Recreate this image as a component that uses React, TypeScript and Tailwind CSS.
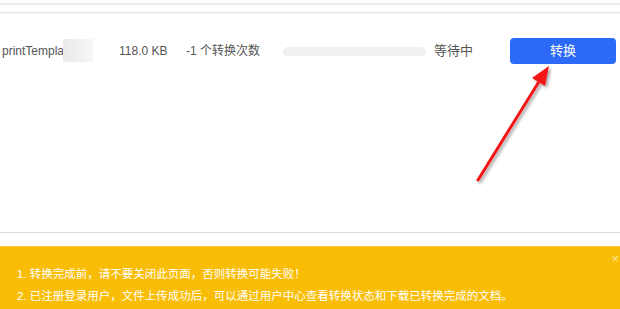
import React from "react";

export default function App() {
  const font = { fontFamily: '"Liberation Sans", Arial, "Noto Sans CJK SC", sans-serif' };
  return (
    <div className="relative w-[620px] h-[309px] bg-white overflow-hidden" style={font}>
      <div className="h-[3px]" />
      <div className="h-[2px] bg-[#ebebeb]" />
      <div className="h-[7px]" />
      <div className="h-[1px] bg-[#e2e2e2] shadow-[0_1px_1px_rgba(0,0,0,0.04)]" />
      <div className="h-[219px] flex items-start pt-[25px]">
        <div className="flex items-center h-[26px] w-full text-[12px] text-[#555]">
          <div className="relative w-[117px] flex items-center h-[26px]">
            <span className="pl-[2px] whitespace-nowrap">printTemplat</span>
            <div className="absolute left-[63px] top-[1px] w-[30px] h-[23px] bg-gradient-to-r from-[#ebe9eb] to-[#f7f7f7]" />
          </div>
          <div className="w-[69px] pl-[2px]">118.0 KB</div>
          <div className="w-[96px]">-1 个转换次数</div>
          <div className="w-[143px] h-[9px] rounded-full bg-[#f0f0f0] ml-[1px]" />
          <div className="w-[84px] pl-[8px] text-[13px]">等待中</div>
          <button className="w-[106px] h-[26px] rounded-[4px] bg-[#2b69f6] text-white text-[13px] flex items-center justify-center">
            转换
          </button>
        </div>
      </div>
      <div className="h-[1px] bg-[#dedede]" />
      <div className="h-[13px]" />
      <div className="relative h-[63px] bg-[#fabd06] border-t border-[#fcc83a] text-white text-[11.5px] leading-[22px] pl-[17px] pt-[16px]">
        <div>1. 转换完成前，请不要关闭此页面，否则转换可能失败！</div>
        <div>2. 已注册登录用户，文件上传成功后，可以通过用户中心查看转换状态和下载已转换完成的文档。</div>
        <span className="absolute right-[1px] top-[5px] text-[13px] leading-none text-white/60">×</span>
      </div>
      <svg className="absolute left-0 top-0 pointer-events-none" width="620" height="309">
        <defs>
          <filter id="sh" x="-20%" y="-20%" width="140%" height="140%">
            <feDropShadow dx="2" dy="2" stdDeviation="1.5" floodColor="#000" floodOpacity="0.35" />
          </filter>
        </defs>
        <g filter="url(#sh)">
          <line x1="478" y1="180" x2="540" y2="80" stroke="#f21414" strokeWidth="3" strokeLinecap="round" />
          <polygon points="549,66 532,78 545,86" fill="#f21414" />
        </g>
      </svg>
    </div>
  );
}
